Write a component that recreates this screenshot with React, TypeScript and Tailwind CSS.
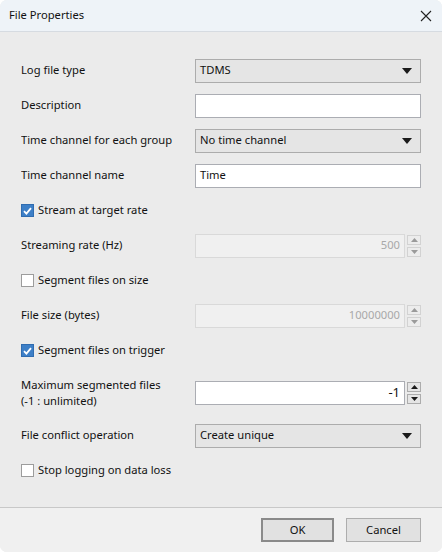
import React from 'react'

// Small Windows-style form controls for the logging dialog

function Arrow() {
  return (
    <svg width="10" height="6" viewBox="0 0 10 6" aria-hidden="true">
      <path d="M0 0h10L5 6z" fill="#1a1a1a" />
    </svg>
  )
}

function Select({ value }: { value: string }) {
  return (
    <div className="flex h-[24px] w-[226px] items-center justify-between border border-[#acacac] bg-[#e5e5e5] pl-[4px] pr-[8px]">
      <span>{value}</span>
      <Arrow />
    </div>
  )
}

function TextBox({ value = '' }: { value?: string }) {
  return (
    <div className="flex h-[24px] w-[226px] items-center border border-[#abadb3] bg-white px-[4px]">
      {value}
    </div>
  )
}

function Spin({ value, disabled }: { value: string; disabled?: boolean }) {
  const arrowFill = disabled ? '#9a9a9a' : '#1a1a1a'
  const btn = disabled
    ? 'flex h-[10px] w-[14px] items-center justify-center border border-[#d2d2d2] bg-[#ececec]'
    : 'flex h-[10px] w-[14px] items-center justify-center border border-[#acacac] bg-[#e5e5e5]'
  return (
    <div className="flex w-[226px] items-center gap-[2px]">
      <div
        className={
          disabled
            ? 'flex h-[24px] flex-1 items-center justify-end border border-[#d9d9d9] bg-[#f0f0f0] pr-[4px] text-[#a8a8a8]'
            : 'flex h-[24px] flex-1 items-center justify-end border border-[#abadb3] bg-white pr-[4px] text-[13px]'
        }
      >
        {value}
      </div>
      <div className="flex flex-col gap-[2px]">
        <div className={btn}>
          <svg width="7" height="4" viewBox="0 0 7 4">
            <path d="M0 4h7L3.5 0z" fill={arrowFill} />
          </svg>
        </div>
        <div className={btn}>
          <svg width="7" height="4" viewBox="0 0 7 4">
            <path d="M0 0h7L3.5 4z" fill={arrowFill} />
          </svg>
        </div>
      </div>
    </div>
  )
}

function Check({ label, checked }: { label: string; checked?: boolean }) {
  return (
    <div className="flex h-[35px] items-center gap-[4px]">
      {checked ? (
        <div className="flex h-[13px] w-[13px] items-center justify-center border border-[#2f6cb0] bg-[#3d7fc7]">
          <svg width="9" height="8" viewBox="0 0 9 8">
            <path d="M1 4.2 3.4 6.6 8 1.2" stroke="#fff" strokeWidth="1.8" fill="none" />
          </svg>
        </div>
      ) : (
        <div className="h-[13px] w-[13px] border border-[#9c9c9c] bg-white" />
      )}
      <span>{label}</span>
    </div>
  )
}

function Row({
  label,
  children,
  tall,
}: {
  label: React.ReactNode
  children: React.ReactNode
  tall?: boolean
}) {
  return (
    <div className={tall ? 'flex h-[50px] items-center' : 'flex h-[35px] items-center'}>
      <div className={tall ? 'w-[174px] leading-[16px]' : 'w-[174px] truncate'}>{label}</div>
      {children}
    </div>
  )
}

export default function App() {
  return (
    <div
      className="flex h-[552px] w-[442px] flex-col overflow-hidden rounded-[7px] bg-[#ebebeb] text-[11.2px] text-[#111]"
      style={{ fontFamily: '"Segoe UI", "Noto Sans", sans-serif' }}
    >
      <div className="flex h-[32px] shrink-0 items-center justify-between border-b border-[#d6dbe1] bg-[#eef3f8] pl-[9px] pr-[10px]">
        <span className="text-[11.2px]">File Properties</span>
        <svg width="12" height="12" viewBox="0 0 12 12" aria-hidden="true">
          <path d="M1 1l10 10M11 1 1 11" stroke="#222" strokeWidth="1.1" />
        </svg>
      </div>

      <div className="flex flex-1 flex-col px-[21px] pt-[21px]">
        <Row label="Log file type">
          <Select value="TDMS" />
        </Row>
        <Row label="Description">
          <TextBox />
        </Row>
        <Row label="Time channel for each group">
          <Select value="No time channel" />
        </Row>
        <Row label="Time channel name">
          <TextBox value="Time" />
        </Row>
        <Check label="Stream at target rate" checked />
        <Row label="Streaming rate (Hz)">
          <Spin value="500" disabled />
        </Row>
        <Check label="Segment files on size" />
        <Row label="File size (bytes)">
          <Spin value="10000000" disabled />
        </Row>
        <Check label="Segment files on trigger" checked />
        <Row
          tall
          label={
            <>
              Maximum segmented files
              <br />
              (-1 : unlimited)
            </>
          }
        >
          <Spin value="-1" />
        </Row>
        <Row label="File conflict operation">
          <Select value="Create unique" />
        </Row>
        <Check label="Stop logging on data loss" />
      </div>

      <div className="flex h-[45px] shrink-0 items-center justify-end gap-[12px] border-t border-[#c8c8c8] bg-[#f0f0f0] pr-[21px]">
        <button className="h-[24px] w-[73px] border-2 border-[#8a8a8a] bg-[#e1e1e1] text-[11.2px]">
          OK
        </button>
        <button className="h-[24px] w-[75px] border border-[#adadad] bg-[#e1e1e1] text-[11.2px]">
          Cancel
        </button>
      </div>
    </div>
  )
}
